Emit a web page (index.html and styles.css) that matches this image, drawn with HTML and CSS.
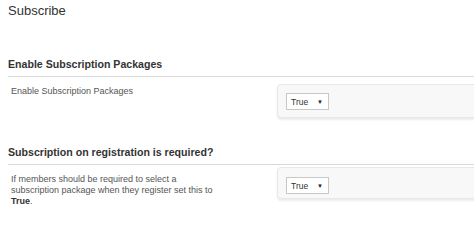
FILE: index.html
```html
<!DOCTYPE html>
<html>
<head>
<meta charset="utf-8">
<link rel="stylesheet" href="styles.css">
</head>
<body>
<div class="page">
  <h1 class="title">Subscribe</h1>
  <section class="group group-first">
    <h2 class="group-head">Enable Subscription Packages</h2>
    <div class="row">
      <div class="label">Enable Subscription Packages</div>
      <div class="field">
        <div class="select"><span>True</span><span class="arrow">&#9660;</span></div>
      </div>
    </div>
  </section>
  <section class="group">
    <h2 class="group-head">Subscription on registration is required?</h2>
    <div class="row">
      <div class="label">If members should be required to select a subscription package when they register set this to <b>True</b>.</div>
      <div class="field field-2">
        <div class="select"><span>True</span><span class="arrow">&#9660;</span></div>
      </div>
    </div>
  </section>
</div>
</body>
</html>
```
FILE: styles.css
```css
html, body {
  margin: 0;
  padding: 0;
  background: #fff;
}
body {
  font-family: "Liberation Sans", Arial, sans-serif;
  color: #333;
  overflow: hidden;
}
.page {
  padding: 3px 0 0 8px;
}
.title {
  margin: 0;
  font-size: 13px;
  font-weight: normal;
  line-height: 15px;
  color: #333;
}
.group {
  margin-top: 28px;
}
.group-first {
  margin-top: 40px;
}
.group-head {
  margin: 0;
  font-size: 10.6px;
  font-weight: bold;
  line-height: 13px;
  color: #333;
  padding-bottom: 5px;
  border-bottom: 1px solid #d9d9d9;
}
.row {
  display: grid;
  grid-template-columns: 269px 1fr;
  padding-top: 7px;
}
.label {
  padding: 2px 0 0 3px;
  font-size: 9px;
  line-height: 11px;
  color: #555;
  width: 205px;
}
.label b {
  color: #333;
}
.field {
  margin-top: 0;
  margin-right: -4px;
  height: 34px;
  box-sizing: border-box;
  background: #f8f8f8;
  border: 1px solid #e8e8e8;
  border-radius: 4px;
  box-shadow: 0 2px 2px rgba(0,0,0,0.08);
  padding: 8px 0 0 8px;
}
.field-2 {
  margin-top: -5px;
  height: 32px;
  padding-top: 9px;
}
.select {
  display: flex;
  align-items: center;
  justify-content: space-between;
  box-sizing: border-box;
  width: 43px;
  height: 17px;
  padding: 0 5px 0 4px;
  background: #fff;
  border: 1px solid #c8c8c8;
  font-size: 8.5px;
  color: #333;
}
.arrow {
  font-size: 6px;
  color: #222;
}
```
